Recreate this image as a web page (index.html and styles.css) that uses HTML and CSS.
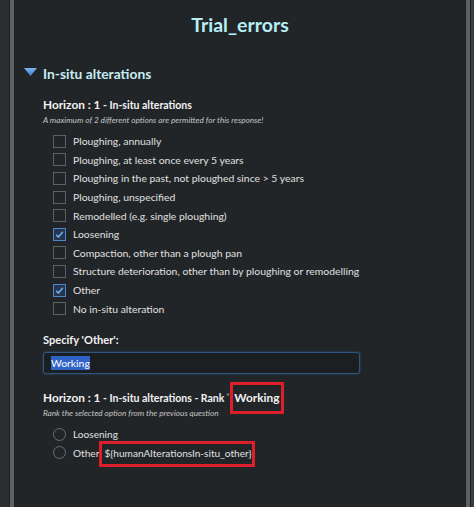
FILE: index.html
```html
<!DOCTYPE html>
<html>
<head>
<meta charset="utf-8">
<link rel="stylesheet" href="styles.css">
</head>
<body>
<div class="frame">
  <div class="gutter-left"></div>
  <div class="rail"></div>
  <div class="panel">
    <h1 class="title">Trial_errors</h1>
    <div class="section-head">
      <svg class="caret" width="13" height="8" viewBox="0 0 13 8"><defs><linearGradient id="g" x1="0" y1="0" x2="0" y2="1"><stop offset="0" stop-color="#7cb4ee"/><stop offset="1" stop-color="#3d7fcf"/></linearGradient></defs><polygon points="0,0 13,0 6.5,8" fill="url(#g)"/></svg>
      <span>In-situ alterations</span>
    </div>
    <div class="question first">
      <div class="q-label"><span class="q-big">Horizon : 1</span> - In-situ alterations</div>
      <div class="hint">A maximum of 2 different options are permitted for this response!</div>
      <ul class="options">
        <li><span class="box"></span>Ploughing, annually</li>
        <li><span class="box"></span>Ploughing, at least once every 5 years</li>
        <li><span class="box"></span>Ploughing in the past, not ploughed since &gt; 5 years</li>
        <li><span class="box"></span>Ploughing, unspecified</li>
        <li><span class="box"></span>Remodelled (e.g. single ploughing)</li>
        <li><span class="box checked"><svg width="9" height="9" viewBox="0 0 9 9"><path d="M1.2 4.8 L3.5 7 L7.8 1.8" fill="none" stroke="#6aa6ea" stroke-width="1.8"/></svg></span>Loosening</li>
        <li><span class="box"></span>Compaction, other than a plough pan</li>
        <li><span class="box"></span>Structure deterioration, other than by ploughing or remodelling</li>
        <li><span class="box checked"><svg width="9" height="9" viewBox="0 0 9 9"><path d="M1.2 4.8 L3.5 7 L7.8 1.8" fill="none" stroke="#6aa6ea" stroke-width="1.8"/></svg></span>Other</li>
        <li><span class="box"></span>No in-situ alteration</li>
      </ul>
    </div>
    <div class="question specify">
      <div class="q-label specify-label">Specify 'Other':</div>
      <div class="input"><span class="sel">Working</span></div>
    </div>
    <div class="question rank">
      <div class="q-label"><span class="q-big">Horizon : 1</span> - In-situ alterations - Rank <span class="star">*</span> <span class="q-big marked mark-a">Working</span></div>
      <div class="hint">Rank the selected option from the previous question</div>
      <ul class="options radios">
        <li><span class="radio"></span>Loosening</li>
        <li><span class="radio"></span>Other:&nbsp;<span class="marked mark-b">${humanAlterationsIn-situ_other}</span></li>
      </ul>
    </div>
  </div>
  <div class="rail rail-right"></div>
  <div class="gutter-right"></div>
</div>
</body>
</html>
```

FILE: styles.css
```css
html, body {
  margin: 0;
  padding: 0;
  height: 100%;
  background: #2a2e31;
  font-family: "Lato", "Open Sans", sans-serif;
}
.frame {
  display: flex;
  height: 507px;
}
.gutter-left {
  width: 9px;
  background: #2a2e31;
}
.gutter-right {
  width: 3px;
  background: #3a3e41;
}
.rail {
  width: 4px;
  background: #5d6164;
  border-left: 1px solid #1d2023;
  border-right: 1px solid #1d2023;
}
.rail-right {
  border-left: 1px solid #1d2023;
  width: 4px;
}
.panel {
  flex: 1;
  background: #222528;
  padding: 11px 0 0 28px;
}
.title {
  margin: 0;
  text-align: center;
  font-size: 19.5px;
  line-height: 28px;
  font-weight: 700;
  color: #b6eef4;
  padding-right: 28px;
}
.section-head {
  display: flex;
  align-items: center;
  margin: 23px 0 0 -19px;
  height: 22px;
  gap: 6px;
  color: #c6ecf2;
  font-size: 13.8px;
  font-weight: 700;
}
.caret {
  margin-top: -2px;
}
.question {
  margin-top: 9px;
}
.question.first {
  margin-top: 12px;
}
.q-label {
  color: #f2f2f2;
  font-weight: 700;
  font-size: 10.5px;
  line-height: 18px;
}
.q-big {
  font-size: 11.8px;
}
.specify-label {
  font-size: 11.1px;
}
.star {
  color: #a8a8a8;
  font-weight: 400;
  font-size: 9px;
  vertical-align: 2px;
  margin-left: -1px;
  margin-right: 2px;
}
.hint {
  font-style: italic;
  color: #c4c4c4;
  font-size: 8.2px;
  line-height: 12px;
  margin-top: 0;
}
.options {
  list-style: none;
  margin: 6px 0 0 10px;
  padding: 0;
}
.options li {
  display: flex;
  align-items: center;
  height: 18.6px;
  color: #e0e0e0;
  font-size: 10.4px;
}
.box {
  width: 11px;
  height: 11px;
  border: 1px solid #5d6164;
  margin-right: 7px;
  display: flex;
  align-items: center;
  justify-content: center;
  flex-shrink: 0;
}
.box.checked {
  border-color: #4d88cf;
  background: #24364b;
}
.specify {
  margin-top: 13px;
}
.input {
  margin-top: 3px;
  width: 308px;
  height: 20px;
  border: 1px solid #2e5680;
  border-radius: 3px;
  background: #1c1f22;
  padding: 0 0 0 7px;
  display: flex;
  align-items: center;
  box-shadow: 0 0 2px #2e5680;
}
.sel {
  background: #2f63c7;
  color: #ffffff;
  font-size: 10.4px;
  line-height: 14px;
}
.rank {
  margin-top: 14px;
}
.radios {
  margin-top: 6px;
}
.radios li {
  font-size: 10.1px;
}
.radio {
  width: 11px;
  height: 11px;
  border: 1.5px solid #6a6e71;
  border-radius: 50%;
  margin-right: 7px;
  flex-shrink: 0;
}
.marked {
  position: relative;
}
.marked::after {
  content: "";
  position: absolute;
  border: 3px solid #dc1f2a;
}
.mark-a::after {
  left: -4px;
  right: -5px;
  top: -8px;
  bottom: -9px;
}
.mark-b::after {
  left: -5px;
  right: -3px;
  top: -6px;
  bottom: -8px;
}
```
